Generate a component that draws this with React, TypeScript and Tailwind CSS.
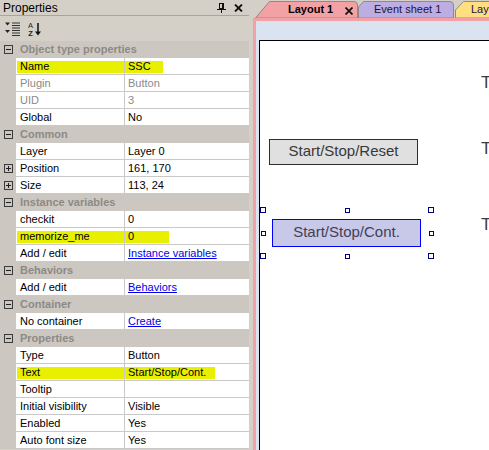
import React from 'react';

type Row =
  | { kind: 'header'; label: string }
  | {
      kind: 'prop';
      name: string;
      value?: string;
      expand?: boolean;  // shows the [+] box in the gutter
      dim?: boolean;     // read-only rows are greyed out
      link?: boolean;
      mark?: number;     // width of the yellow highlighter stroke
    };

const ROWS: Row[] = [
  { kind: 'header', label: 'Object type properties' },
  { kind: 'prop', name: 'Name', value: 'SSC', mark: 146 },
  { kind: 'prop', name: 'Plugin', value: 'Button', dim: true },
  { kind: 'prop', name: 'UID', value: '3', dim: true },
  { kind: 'prop', name: 'Global', value: 'No' },
  { kind: 'header', label: 'Common' },
  { kind: 'prop', name: 'Layer', value: 'Layer 0' },
  { kind: 'prop', name: 'Position', value: '161, 170', expand: true },
  { kind: 'prop', name: 'Size', value: '113, 24', expand: true },
  { kind: 'header', label: 'Instance variables' },
  { kind: 'prop', name: 'checkit', value: '0' },
  { kind: 'prop', name: 'memorize_me', value: '0', mark: 152 },
  { kind: 'prop', name: 'Add / edit', value: 'Instance variables', link: true },
  { kind: 'header', label: 'Behaviors' },
  { kind: 'prop', name: 'Add / edit', value: 'Behaviors', link: true },
  { kind: 'header', label: 'Container' },
  { kind: 'prop', name: 'No container', value: 'Create', link: true },
  { kind: 'header', label: 'Properties' },
  { kind: 'prop', name: 'Type', value: 'Button' },
  { kind: 'prop', name: 'Text', value: 'Start/Stop/Cont.', mark: 198 },
  { kind: 'prop', name: 'Tooltip', value: '' },
  { kind: 'prop', name: 'Initial visibility', value: 'Visible' },
  { kind: 'prop', name: 'Enabled', value: 'Yes' },
  { kind: 'prop', name: 'Auto font size', value: 'Yes' },
];

function ToggleBox({ plus }: { plus?: boolean }) {
  return (
    <svg width="9" height="9" viewBox="0 0 9 9" className="block">
      <rect x="0.5" y="0.5" width="8" height="8" fill="none" stroke="#3a3a3a" />
      <line x1="2" y1="4.5" x2="7" y2="4.5" stroke="#202020" />
      {plus && <line x1="4.5" y1="2" x2="4.5" y2="7" stroke="#202020" />}
    </svg>
  );
}

function GridRow({ row }: { row: Row }) {
  if (row.kind === 'header') {
    return (
      <div className="flex h-[17px] bg-[#ccc8c1]">
        <div className="flex w-[16px] shrink-0 items-center justify-center">
          <ToggleBox />
        </div>
        <div className="pl-[4px] text-[11px] font-bold leading-[17px] text-[#8c8a86]">{row.label}</div>
      </div>
    );
  }
  const tone = row.dim ? 'text-[#8a8a8a]' : 'text-black';
  return (
    <div className="flex h-[17px]">
      <div className="flex w-[16px] shrink-0 items-center justify-center bg-[#ccc8c1]">
        {row.expand && <ToggleBox plus />}
      </div>
      <div className="relative flex flex-1 border-b border-[#c9c9c9] bg-white">
        {row.mark && (
          <div className="absolute left-[1px] top-[3px] h-[12px] bg-[#e8f000]" style={{ width: row.mark }} />
        )}
        <div className={`relative w-[109px] shrink-0 border-r border-[#c9c9c9] pl-[4px] text-[11px] leading-[16px] ${tone}`}>
          {row.name}
        </div>
        <div className={`relative flex-1 pl-[3px] text-[11px] leading-[16px] ${tone}`}>
          {row.link ? <span className="text-[#0000ee] underline">{row.value}</span> : row.value}
        </div>
      </div>
    </div>
  );
}

function PropertiesPanel() {
  return (
    <div className="flex w-[249px] shrink-0 flex-col bg-[#d4d0c8]">
      {/* Title */}
      <div className="flex h-[16px] items-center border-b border-[#a9a59e] pl-[3px] pr-[6px]">
        <span className="flex-1 text-[12px] leading-none text-black">Properties</span>
        <svg width="9" height="10" viewBox="0 0 9 10" className="mr-[8px]">
          <rect x="2.5" y="0.5" width="4" height="5" fill="none" stroke="#111" />
          <line x1="5.5" y1="1" x2="5.5" y2="5.5" stroke="#111" />
          <line x1="0" y1="6.5" x2="9" y2="6.5" stroke="#111" />
          <line x1="4.5" y1="6.5" x2="4.5" y2="10" stroke="#111" />
        </svg>
        <svg width="9" height="8" viewBox="0 0 9 8">
          <path d="M1 0.5 L8 7.5 M8 0.5 L1 7.5" stroke="#111" strokeWidth="1.8" />
        </svg>
      </div>

      {/* Toolbar */}
      <div className="flex h-[25px] items-center gap-[8px] pl-[5px]">
        <svg width="15" height="14" viewBox="0 0 15 14">
          <path d="M0 0.5 L5 0.5 L2.5 3.5 Z" fill="#222" />
          <line x1="7" y1="1" x2="15" y2="1" stroke="#333" />
          <line x1="7" y1="3.5" x2="15" y2="3.5" stroke="#333" />
          <line x1="7" y1="6" x2="15" y2="6" stroke="#333" />
          <path d="M0 8 L5 8 L2.5 11 Z" fill="#222" />
          <line x1="7" y1="8.5" x2="15" y2="8.5" stroke="#333" />
          <line x1="7" y1="11" x2="15" y2="11" stroke="#333" />
          <line x1="7" y1="13.5" x2="15" y2="13.5" stroke="#333" />
        </svg>
        <svg width="14" height="14" viewBox="0 0 14 14">
          <text x="0" y="6" fontSize="7.5" fontFamily="Liberation Sans, sans-serif" fill="#222">A</text>
          <text x="0.3" y="13.5" fontSize="7.5" fontFamily="Liberation Sans, sans-serif" fontWeight="bold" fill="#222">Z</text>
          <line x1="10" y1="1" x2="10" y2="12" stroke="#111" strokeWidth="1.5" />
          <path d="M7 9.5 L13 9.5 L10 13.5 Z" fill="#111" />
        </svg>
      </div>

      {/* Grid */}
      <div className="flex flex-col">
        {ROWS.map((r, i) => (
          <GridRow key={i} row={r} />
        ))}
      </div>
    </div>
  );
}

function Tabs() {
  return (
    <div className="flex h-[18px] items-end">
      <div className="relative z-20 ml-[2px] h-[17px] w-[103px] shrink-0">
        <svg width="103" height="17" className="absolute inset-0">
          <path d="M0.5 17 L14.5 0.5 L99 0.5 Q102.5 0.5 102.5 4 L102.5 17 Z" fill="#f2a2a4" stroke="#8e8a86" />
        </svg>
        <span className="absolute left-[33px] top-[2px] text-[11px] font-bold leading-[13px] text-black">Layout 1</span>
        <svg width="8" height="8" viewBox="0 0 8 8" className="absolute left-[90px] top-[6px]">
          <path d="M0.5 0.5 L7.5 7.5 M7.5 0.5 L0.5 7.5" stroke="#111" strokeWidth="1.7" />
        </svg>
      </div>
      <div className="relative z-10 h-[17px] w-[96px] shrink-0">
        <svg width="96" height="17" className="absolute inset-0">
          <path d="M0.5 17 L0.5 6 L5.5 0.5 L92 0.5 Q95.5 0.5 95.5 4 L95.5 17 Z" fill="#bcade2" stroke="#8e8a86" />
        </svg>
        <span className="absolute left-[16px] top-[2px] text-[11px] leading-[13px] text-[#1c1238]">Event sheet 1</span>
      </div>
      <div className="relative ml-[1px] h-[17px] w-[60px] shrink-0">
        <svg width="60" height="17" className="absolute inset-0">
          <path d="M0.5 17 L0.5 9 L8.5 0.5 L60 0.5 L60 17 Z" fill="#ffdf80" stroke="#8e8a86" />
        </svg>
        <span className="absolute left-[16px] top-[2px] text-[11px] leading-[13px] text-[#1c1238]">Layout 2</span>
      </div>
    </div>
  );
}

function Handle({ x, y, big }: { x: number; y: number; big?: boolean }) {
  const s = big ? 6 : 5;
  return (
    <div
      className="absolute border border-[#000080] bg-white"
      style={{ left: x - s / 2, top: y - s / 2, width: s, height: s }}
    />
  );
}

function LayoutView() {
  return (
    <div className="flex min-w-0 flex-1 flex-col overflow-hidden bg-[#d4d0c8] pl-[4px]">
      <Tabs />
      <div className="flex flex-1 flex-col border-l-[3px] border-t-[3px] border-[#f2a2a4] bg-[#dae4f0] pl-[3px] pt-[19px]">
        <div className="relative flex-1 overflow-hidden border-l border-t border-black bg-white">
          <div className="absolute left-[9px] top-[98px] flex h-[26px] w-[149px] items-center justify-center border border-[#2e2e2e] bg-[#e0e0e0] pb-[2px] text-[15px] text-[#383838]">
            Start/Stop/Reset
          </div>
          <div className="absolute left-[12px] top-[178px] flex h-[28px] w-[149px] items-center justify-center border border-[#0000ff] bg-[#c8c8e8] pb-[1px] text-[15px] text-[#404058]">
            Start/Stop/Cont.
          </div>
          <Handle x={3} y={169} big />
          <Handle x={87} y={169} />
          <Handle x={171} y={169} big />
          <Handle x={3} y={192} />
          <Handle x={171} y={192} />
          <Handle x={3} y={215} big />
          <Handle x={87} y={215} />
          <Handle x={171} y={215} big />
          <div className="absolute left-[221px] top-[33px] whitespace-nowrap text-[17px] leading-none text-[#3c3c3c]">Text</div>
          <div className="absolute left-[221px] top-[99px] whitespace-nowrap text-[17px] leading-none text-[#3c3c3c]">Text</div>
          <div className="absolute left-[221px] top-[175px] whitespace-nowrap text-[17px] leading-none text-[#3c3c3c]">Text</div>
        </div>
      </div>
    </div>
  );
}

export default function App() {
  return (
    <div className="flex h-[450px] w-[489px] overflow-hidden bg-[#d4d0c8] font-['Liberation_Sans',Arial,sans-serif]">
      <PropertiesPanel />
      <LayoutView />
    </div>
  );
}
